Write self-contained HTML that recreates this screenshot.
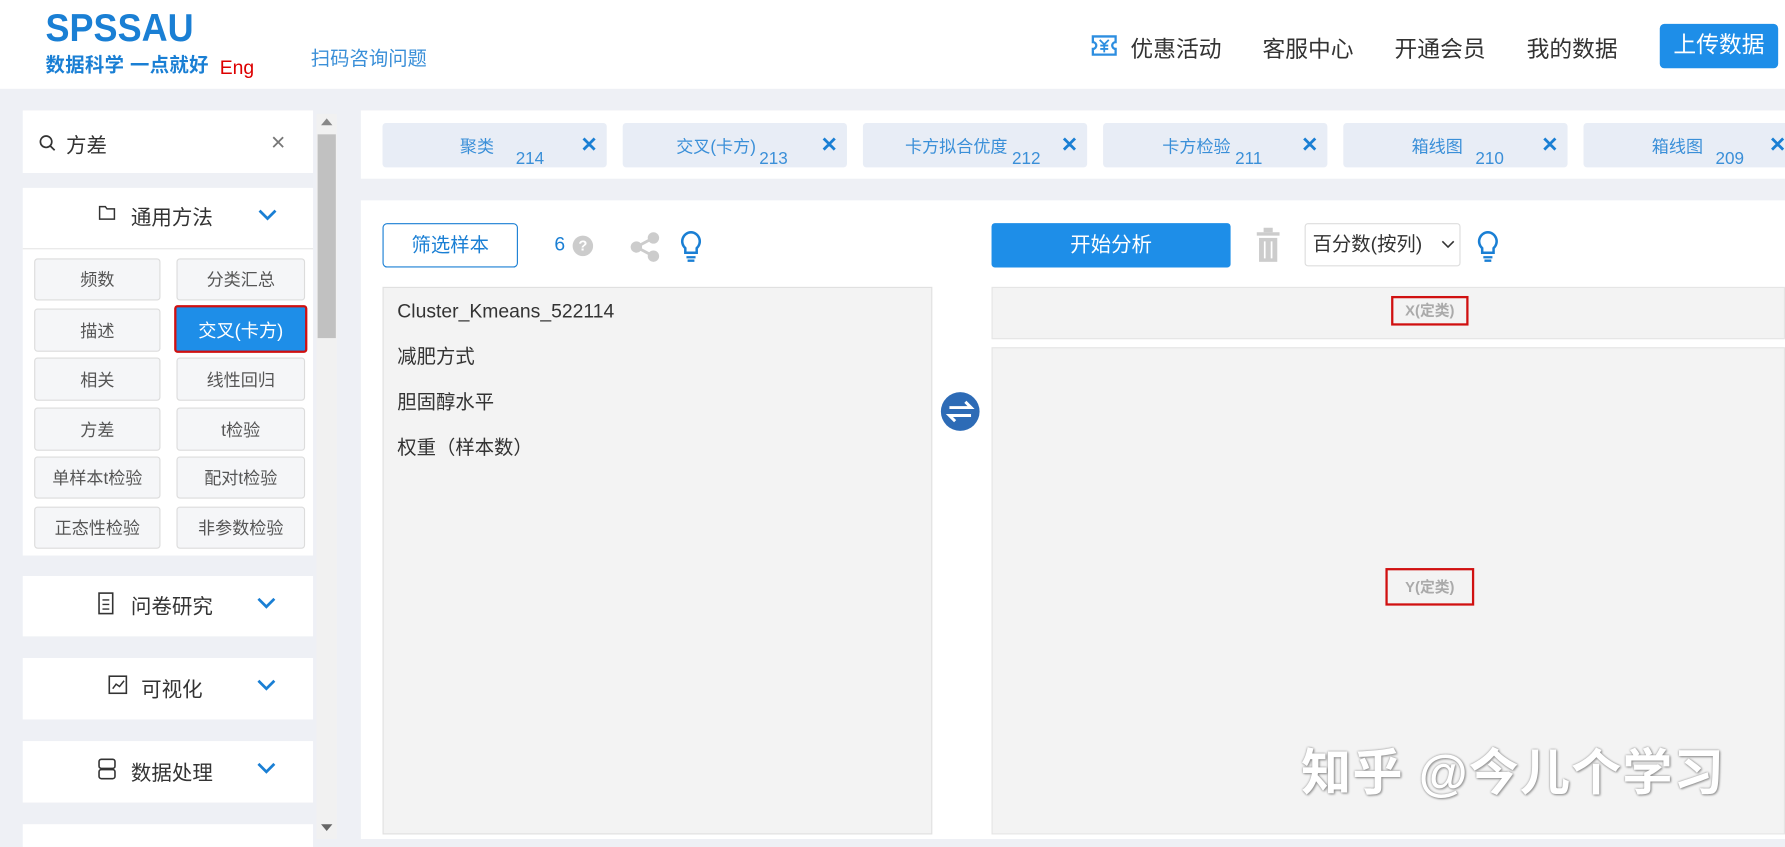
<!DOCTYPE html>
<html><head><meta charset="utf-8"><style>
*{box-sizing:border-box;margin:0;padding:0}
html,body{width:1785px;height:839px;overflow:hidden;background:#eef0f5}
#w{position:absolute;left:0;top:0;width:1568px;height:737px;transform:scale(1.13839);transform-origin:0 0;font-family:"Liberation Sans","Noto Sans CJK SC",sans-serif;color:#333}
.a{position:absolute}
.hdr{left:0;top:0;width:1568px;height:78px;background:#fff}
.nav{top:27px;font-size:20px;color:#333}
.box{background:#fff}
.btn{position:absolute;background:#f5f6f8;border:1px solid #dcdcdc;border-radius:3px;font-size:15px;color:#555;display:flex;align-items:center;justify-content:center}
.sec{position:absolute;left:20px;width:255px;background:#fff;font-size:18px;color:#333}
.tab{position:absolute;top:108px;width:197px;height:39px;background:#e8edf6;border-radius:3px;font-size:15px;color:#3a8fd8}
.tab .t{position:absolute;top:10px}
.tab .n{position:absolute;top:23px;font-size:15px}
.tab .x{position:absolute;right:8px;top:9px;font-size:18px;color:#1a7fd4;font-weight:bold}
.chev{position:absolute;left:205px;top:18px}
</style></head><body><div id="w">
<div class="a hdr"></div>
<div class="a" style="left:40px;top:6px;font-size:34px;font-weight:bold;color:#1a7fd4;transform:scaleX(0.93);transform-origin:0 0">SPSSAU</div>
<div class="a" style="left:40px;top:43px;font-size:17px;font-weight:bold;color:#1a7fd4;letter-spacing:0.3px">数据科学 一点就好</div>
<div class="a" style="left:193px;top:50px;font-size:17px;color:#d00">Eng</div>
<div class="a" style="left:273px;top:37px;font-size:17px;color:#3a8fd8">扫码咨询问题</div>
<svg class="a" style="left:958px;top:30px" width="24" height="20" viewBox="0 0 24 20"><path d="M2 2h20v5a3 3 0 0 0 0 6v5H2v-5a3 3 0 0 0 0-6z" fill="none" stroke="#2d8ee0" stroke-width="2"/><path d="M8 5l4 4 4-4M12 9v7M8.5 10h7M8.5 13h7" stroke="#2d8ee0" stroke-width="1.6" fill="none"/></svg>
<div class="a nav" style="left:993px">优惠活动</div>
<div class="a nav" style="left:1109px">客服中心</div>
<div class="a nav" style="left:1225px">开通会员</div>
<div class="a nav" style="left:1341px">我的数据</div>
<div class="a" style="left:1458px;top:21px;width:104px;height:39px;background:#1e8ee8;border-radius:4px;color:#fff;font-size:20px;text-align:center;line-height:39px">上传数据</div>

<div class="a box" style="left:20px;top:97px;width:255px;height:55px"></div>
<svg class="a" style="left:34px;top:118px" width="16" height="16"><circle cx="6.5" cy="6.5" r="5" fill="none" stroke="#333" stroke-width="1.5"/><path d="M10 10l4 4" stroke="#333" stroke-width="1.5"/></svg>
<div class="a" style="left:58px;top:114px;font-size:18px">方差</div>
<div class="a" style="left:238px;top:112px;font-size:22px;color:#777">×</div>
<div class="a" style="left:278px;top:100px;width:18px;height:637px;background:#f1f1f1"></div>
<div class="a" style="left:279px;top:118px;width:16px;height:179px;background:#c1c1c1"></div>
<div class="a" style="left:282px;top:104px;width:0;height:0;border:5px solid transparent;border-bottom:6px solid #888;border-top:0"></div>
<div class="a" style="left:282px;top:724px;width:0;height:0;border:5px solid transparent;border-top:6px solid #666;border-bottom:0"></div>

<div class="sec" style="top:165px;height:323px"></div>
<div class="a" style="left:20px;top:218px;width:255px;height:1px;background:#e5e5e5"></div>
<svg class="a" style="left:86px;top:179px" width="16" height="16"><path d="M1.5 2.5h5l1.5 2h6.5v9h-13z" fill="none" stroke="#333" stroke-width="1.3"/></svg>
<div class="a" style="left:115px;top:177px;font-size:18px">通用方法</div>
<svg class="a" style="left:226px;top:183px" width="18" height="12"><path d="M2 2l7 7 7-7" fill="none" stroke="#1a7fd4" stroke-width="2.4"/></svg>
<div class="btn" style="left:30px;top:227px;width:111px;height:37px">频数</div>
<div class="btn" style="left:155px;top:227px;width:113px;height:37px">分类汇总</div>
<div class="btn" style="left:30px;top:271px;width:111px;height:38px">描述</div>
<div class="btn" style="left:153px;top:268px;width:117px;height:42px;background:#1e8ee8;border:2px solid #d01010;color:#fff;font-size:16px">交叉(卡方)</div>
<div class="btn" style="left:30px;top:314px;width:111px;height:38px">相关</div>
<div class="btn" style="left:155px;top:314px;width:113px;height:38px">线性回归</div>
<div class="btn" style="left:30px;top:358px;width:111px;height:38px">方差</div>
<div class="btn" style="left:155px;top:358px;width:113px;height:38px">t检验</div>
<div class="btn" style="left:30px;top:401px;width:111px;height:37px">单样本t检验</div>
<div class="btn" style="left:155px;top:401px;width:113px;height:37px">配对t检验</div>
<div class="btn" style="left:30px;top:445px;width:111px;height:37px">正态性检验</div>
<div class="btn" style="left:155px;top:445px;width:113px;height:37px">非参数检验</div>

<div class="sec" style="top:506px;height:53px"><svg class="a" style="left:66px;top:14px" width="14" height="20"><rect x="1" y="1" width="12" height="18" fill="none" stroke="#333" stroke-width="1.4"/><path d="M4 7h6M4 11h6M4 15h6" stroke="#333" stroke-width="1.2"/></svg><span class="a" style="left:95px;top:13px">问卷研究</span><svg class="chev" width="18" height="12"><path d="M2 2l7 7 7-7" fill="none" stroke="#1a7fd4" stroke-width="2.4"/></svg></div>
<div class="sec" style="top:578px;height:54px"><svg class="a" style="left:75px;top:15px" width="17" height="17"><rect x="1" y="1" width="15" height="15" fill="none" stroke="#333" stroke-width="1.4"/><path d="M4 12l3-4 3 2 4-5" fill="none" stroke="#333" stroke-width="1.3"/></svg><span class="a" style="left:104px;top:14px">可视化</span><svg class="chev" width="18" height="12"><path d="M2 2l7 7 7-7" fill="none" stroke="#1a7fd4" stroke-width="2.4"/></svg></div>
<div class="sec" style="top:651px;height:54px"><svg class="a" style="left:66px;top:15px" width="16" height="19"><rect x="1" y="1" width="14" height="8" rx="2" fill="none" stroke="#333" stroke-width="1.4"/><rect x="1" y="10" width="14" height="8" rx="2" fill="none" stroke="#333" stroke-width="1.4"/></svg><span class="a" style="left:95px;top:14px">数据处理</span><svg class="chev" width="18" height="12"><path d="M2 2l7 7 7-7" fill="none" stroke="#1a7fd4" stroke-width="2.4"/></svg></div>
<div class="sec" style="top:724px;height:20px"></div>

<div class="a box" style="left:317px;top:97px;width:1251px;height:60px"></div>
<div class="tab" style="left:336px"><span class="t" style="left:68px">聚类</span><span class="n" style="left:117px">214</span><span class="x">✕</span></div>
<div class="tab" style="left:547px"><span class="t" style="left:47px">交叉(卡方)</span><span class="n" style="left:120px">213</span><span class="x">✕</span></div>
<div class="tab" style="left:758px"><span class="t" style="left:37px">卡方拟合优度</span><span class="n" style="left:131px">212</span><span class="x">✕</span></div>
<div class="tab" style="left:969px"><span class="t" style="left:52px">卡方检验</span><span class="n" style="left:116px">211</span><span class="x">✕</span></div>
<div class="tab" style="left:1180px"><span class="t" style="left:60px">箱线图</span><span class="n" style="left:116px">210</span><span class="x">✕</span></div>
<div class="tab" style="left:1391px;width:190px"><span class="t" style="left:60px">箱线图</span><span class="n" style="left:116px">209</span><span class="x" style="right:12px">✕</span></div>

<div class="a box" style="left:317px;top:176px;width:1251px;height:561px"></div>
<div class="a" style="left:336px;top:196px;width:119px;height:39px;border:1px solid #1a7fd4;border-radius:4px;color:#1a7fd4;font-size:17px;text-align:center;line-height:37px">筛选样本</div>
<div class="a" style="left:487px;top:205px;font-size:17px;color:#1a7fd4">6</div>
<div class="a" style="left:503px;top:207px;width:18px;height:18px;border-radius:50%;background:#ccc;color:#fff;font-size:13px;text-align:center;line-height:18px;font-weight:bold">?</div>
<svg class="a" style="left:553px;top:203px" width="28" height="28"><circle cx="6" cy="14" r="5" fill="#ccc"/><circle cx="21" cy="6" r="5" fill="#ccc"/><circle cx="21" cy="22" r="5" fill="#ccc"/><path d="M6 14L21 6M6 14l15 8" stroke="#ccc" stroke-width="2.5"/></svg>
<svg class="a" style="left:596px;top:202px" width="22" height="30"><path d="M11 2a8 8 0 0 0-5 14v4h10v-4a8 8 0 0 0-5-14z" fill="none" stroke="#1a7fd4" stroke-width="2.2"/><path d="M7 24h8M8 27h6" stroke="#1a7fd4" stroke-width="2"/></svg>
<div class="a" style="left:871px;top:196px;width:210px;height:39px;background:#1e8ee8;border-radius:3px;color:#fff;font-size:18px;text-align:center;line-height:39px">开始分析</div>
<svg class="a" style="left:1102px;top:200px" width="24" height="31"><rect x="2" y="4" width="20" height="3" fill="#ccc"/><rect x="8" y="0" width="8" height="4" fill="#ccc"/><rect x="4" y="9" width="16" height="21" fill="#ccc"/><path d="M9 12v15M15 12v15" stroke="#fff" stroke-width="1.5"/></svg>
<div class="a" style="left:1146px;top:196px;width:137px;height:38px;border:1px solid #ddd;border-radius:3px;font-size:17px;line-height:36px;padding-left:6px">百分数(按列)</div>
<svg class="a" style="left:1266px;top:211px" width="12" height="8"><path d="M1 1l5 5 5-5" fill="none" stroke="#333" stroke-width="1.4"/></svg>
<svg class="a" style="left:1296px;top:202px" width="22" height="30"><path d="M11 2a8 8 0 0 0-5 14v4h10v-4a8 8 0 0 0-5-14z" fill="none" stroke="#1a7fd4" stroke-width="2.2"/><path d="M7 24h8M8 27h6" stroke="#1a7fd4" stroke-width="2"/></svg>

<div class="a" style="left:336px;top:252px;width:483px;height:481px;background:#f3f3f3;border:1px solid #e0e0e0"></div>
<div class="a" style="left:349px;top:254px;font-size:17px;line-height:40px">Cluster_Kmeans_522114<br>减肥方式<br>胆固醇水平<br>权重（样本数）</div>
<svg class="a" style="left:826px;top:344px" width="35" height="35"><circle cx="17.5" cy="17.5" r="17" fill="#2d6bb6"/><path d="M8 14h19l-5-5M27 21H8l5 5" fill="none" stroke="#fff" stroke-width="2.6"/></svg>
<div class="a" style="left:871px;top:252px;width:697px;height:46px;background:#f3f3f3;border:1px solid #e5e5e5"></div>
<div class="a" style="left:1222px;top:260px;width:68px;height:26px;border:2px solid #d01010;font-size:13px;color:#aaa;font-weight:bold;text-align:center;line-height:22px">X(定类)</div>
<div class="a" style="left:871px;top:305px;width:697px;height:428px;background:#f3f3f3;border:1px solid #e5e5e5"></div>
<div class="a" style="left:1217px;top:499px;width:78px;height:33px;border:2px solid #d01010;font-size:13px;color:#aaa;font-weight:bold;text-align:center;line-height:29px">Y(定类)</div>
<div class="a" style="left:1143px;top:643px;font-size:44px;color:#fff;font-weight:bold;text-shadow:0 0 2px #888,1px 1px 2px #999;letter-spacing:1px">知乎 @今儿个学习</div>
</div></body></html>
